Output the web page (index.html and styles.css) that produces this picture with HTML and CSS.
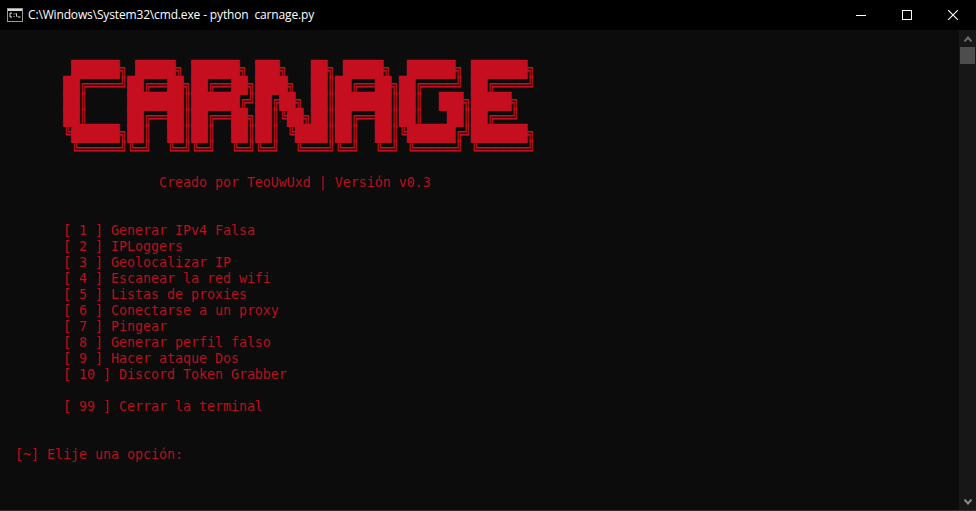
FILE: index.html
```html
<!DOCTYPE html>
<html lang="es">
<head>
<meta charset="utf-8">
<title>cmd.exe - python carnage.py</title>
<link rel="stylesheet" href="styles.css">
</head>
<body>
<div class="window">
  <header class="titlebar">
    <svg class="app-icon" width="16" height="14" viewBox="0 0 16 14">
      <rect x="0.5" y="0.5" width="15" height="13" fill="#000" stroke="#9a9a9a"/>
      <rect x="1" y="1" width="14" height="2" fill="#d8d8d8"/>
      <path d="M5 5H3V9H5M7 5.5V6.5M7 8V9M9 5L10 9M11 9H13.5" fill="none" stroke="#e6e6e6"/>
    </svg>
    <span class="title">C:\Windows\System32\cmd.exe - python  carnage.py</span>
    <div class="controls">
      <span class="control"><svg width="10" height="10" viewBox="0 0 10 10"><path d="M0 5.5H10" stroke="#fff"/></svg></span>
      <span class="control"><svg width="10" height="10" viewBox="0 0 10 10"><rect x="0.5" y="0.5" width="9" height="9" fill="none" stroke="#fff"/></svg></span>
      <span class="control"><svg width="10" height="10" viewBox="0 0 10 10"><path d="M0 0L10 10M10 0L0 10" stroke="#fff" stroke-width="1.1"/></svg></span>
    </div>
  </header>
  <div class="content">
    <main class="terminal">
<pre class="banner"> ██████╗ █████╗ ██████╗ ███╗   ██╗ █████╗  ██████╗ ███████╗
██╔════╝██╔══██╗██╔══██╗████╗  ██║██╔══██╗██╔════╝ ██╔════╝
██║     ███████║██████╔╝██╔██╗ ██║███████║██║  ███╗█████╗  
██║     ██╔══██║██╔══██╗██║╚██╗██║██╔══██║██║   ██║██╔══╝  
╚██████╗██║  ██║██║  ██║██║ ╚████║██║  ██║╚██████╔╝███████╗
 ╚═════╝╚═╝  ╚═╝╚═╝  ╚═╝╚═╝  ╚═══╝╚═╝  ╚═╝ ╚═════╝ ╚══════╝</pre>
<pre class="output">

                    Creado por TeoUwUxd | Versión v0.3


        [ 1 ] Generar IPv4 Falsa
        [ 2 ] IPLoggers
        [ 3 ] Geolocalizar IP
        [ 4 ] Escanear la red wifi
        [ 5 ] Listas de proxies
        [ 6 ] Conectarse a un proxy
        [ 7 ] Pingear
        [ 8 ] Generar perfil falso
        [ 9 ] Hacer ataque Dos
        [ 10 ] Discord Token Grabber

        [ 99 ] Cerrar la terminal


  [~] Elije una opción:</pre>
    </main>
    <aside class="scrollbar">
      <svg class="arrow" width="8" height="6" viewBox="0 0 8 6"><path d="M0.5 5.5L4 1.5L7.5 5.5" fill="none" stroke="#6e6e6e" stroke-width="2"/></svg>
      <div class="thumb"></div>
      <svg class="arrow arrow-down" width="8" height="6" viewBox="0 0 8 6"><path d="M0.5 0.5L4 4.5L7.5 0.5" fill="none" stroke="#8a8a8a" stroke-width="2"/></svg>
    </aside>
  </div>
</div>
</body>
</html>
```
FILE: styles.css
```css
* { box-sizing: border-box; }
html, body { margin: 0; height: 100%; background: #0c0c0c; overflow: hidden; }
.window { display: flex; flex-direction: column; height: 511px; width: 976px; }
.titlebar { display: flex; align-items: center; height: 30px; flex: none; background: #000; color: #fff; padding-left: 7px; }
.app-icon { flex: none; margin-right: 5px; }
.title { font: 12px/30px "Open Sans", sans-serif; white-space: pre; letter-spacing: -0.15px; }
.controls { display: flex; margin-left: auto; }
.control { width: 46px; height: 30px; display: flex; align-items: center; justify-content: center; }
.content { display: flex; flex: 1; min-height: 0; border-bottom: 1px solid #2e2e2e; }
.terminal { flex: 1; overflow: hidden; padding-top: 32px; }
.banner { margin: 0 0 0 63px; font: 16.4px/16px "DejaVu Sans Mono", monospace; letter-spacing: -0.6px; color: #c50f1f; transform: scaleX(0.8627); transform-origin: 0 0; height: 96px; width: 700px; }
.output { margin: 1px 0 0 -1px; font: 13.29px/16px "DejaVu Sans Mono", monospace; color: #bc0e1d; }
.scrollbar { width: 17px; flex: none; background: #171717; display: flex; flex-direction: column; align-items: center; padding: 6px 0 5px; }
.arrow { flex: none; }
.arrow-down { margin-top: auto; }
.thumb { width: 15px; height: 17px; background: #4d4d4d; margin-top: 5px; }
```
